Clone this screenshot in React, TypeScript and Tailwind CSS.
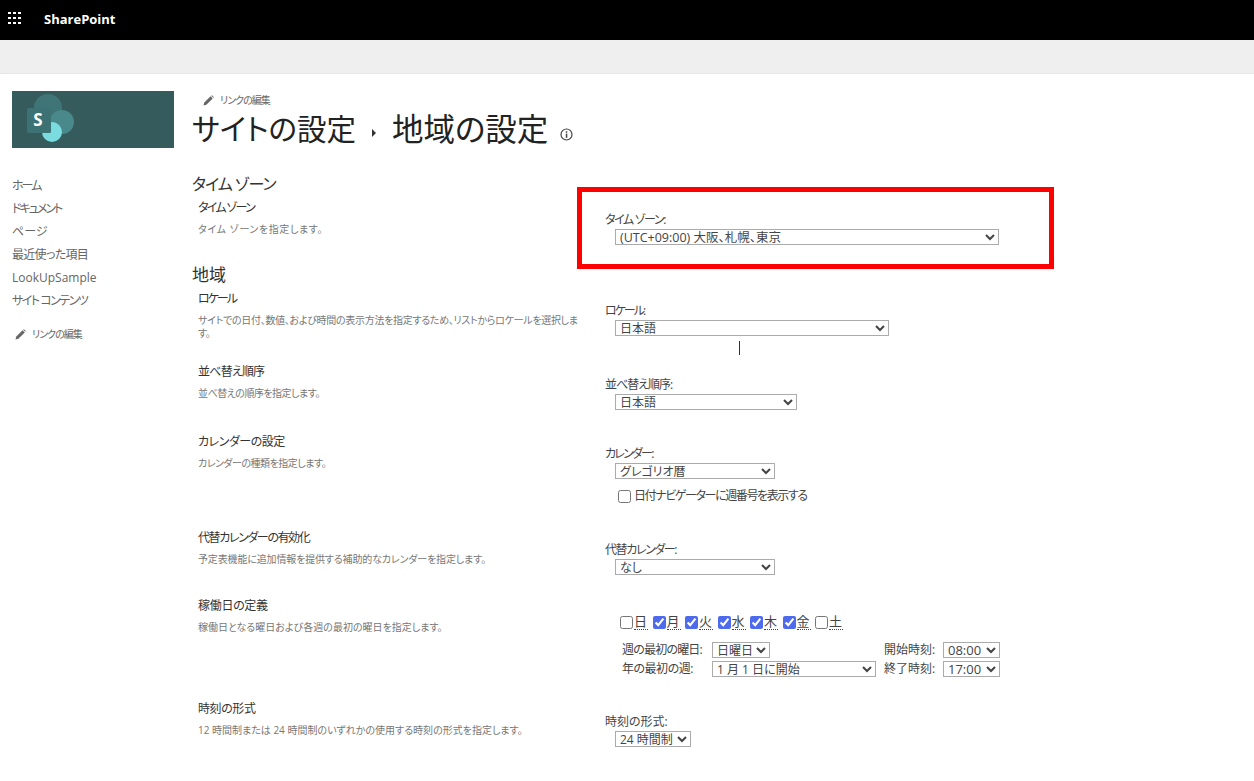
import React from "react";

const navItems = [
  { label: "ホーム", cls: "tracking-[-2px]" },
  { label: "ドキュメント", cls: "tracking-[-2px]" },
  { label: "ページ", cls: "" },
  { label: "最近使った項目", cls: "tracking-[-0.7px]" },
  { label: "LookUpSample", cls: "" },
  { label: "サイト コンテンツ", cls: "tracking-[-1.5px]" },
];

const days = [
  { label: "日", on: false },
  { label: "月", on: true },
  { label: "火", on: true },
  { label: "水", on: true },
  { label: "木", on: true },
  { label: "金", on: true },
  { label: "土", on: false },
];

function PencilIcon() {
  return (
    <svg width="11" height="11" viewBox="0 0 11 11" className="shrink-0">
      <path d="M0.5 10.5 L1.3 7.6 L7.6 1.3 L9.7 3.4 L3.4 9.7 Z" fill="#666" />
      <path d="M8.2 0.7 L8.9 0.2 L10.8 2.1 L10.3 2.8 Z" fill="#666" />
    </svg>
  );
}

// border sits on the wrapper, the select is taller than it so the CJK line box stays centered
function Select({ value, className, textCls = "text-[12px]" }: { value: string; className: string; textCls?: string }) {
  return (
    <div className={`h-4 overflow-hidden border border-[#ababab] bg-white ${className}`}>
      <select
        defaultValue={value}
        className={`-my-[3px] block h-5 w-full border-0 bg-transparent p-0 text-[#444] outline-none ${textCls}`}
      >
        <option value={value}>{value}</option>
      </select>
    </div>
  );
}

function Section({
  title,
  titleCls = "",
  desc,
  descCls = "",
  height,
  children,
}: {
  title: string;
  titleCls?: string;
  desc: React.ReactNode;
  descCls?: string;
  height: string;
  children: React.ReactNode;
}) {
  return (
    <div className={`grid grid-cols-[413px_1fr] ${height}`}>
      <div className="pl-[6px] pt-px">
        <div className={`h-5 text-[12px] leading-5 text-[#333] ${titleCls}`}>{title}</div>
        <div className={`mt-[5px] text-[10px] leading-[13px] text-[#777] ${descCls}`}>{desc}</div>
      </div>
      <div>{children}</div>
    </div>
  );
}

function Field({
  label,
  labelCls = "",
  topCls = "pt-[15px]",
  children,
}: {
  label: string;
  labelCls?: string;
  topCls?: string;
  children: React.ReactNode;
}) {
  return (
    <div className={topCls}>
      <div className={`mb-px h-4 text-[12px] leading-4 text-[#444] ${labelCls}`}>{label}</div>
      <div className="pl-[10px]">{children}</div>
    </div>
  );
}

export default function App() {
  return (
    <div
      className="relative h-screen overflow-hidden bg-white [font-feature-settings:'palt']"
      style={{ fontFamily: '"Open Sans", "Noto Sans CJK JP", sans-serif' }}
    >
      {/* top bar */}
      <div className="flex h-10 items-center bg-black">
        <div className="w-11 pl-2">
          <div className="-mt-[4px] grid w-fit grid-cols-3 gap-[2.5px]">
            {Array.from({ length: 9 }).map((_, i) => (
              <span key={i} className="h-[2.5px] w-[2.5px] bg-white" />
            ))}
          </div>
        </div>
        <span className="text-[13px] font-bold text-white">SharePoint</span>
      </div>
      <div className="h-[34px] border-b border-[#e6e6e6] bg-[#efefef]" />

      <div className="flex">
        {/* left nav */}
        <aside className="w-[192px] shrink-0 pl-3 pt-[17px]">
          <div className="h-[57px] w-[162px] bg-[#365b5d]">
            <svg width="70" height="57" viewBox="0 0 70 57">
              <circle cx="36" cy="17" r="14" fill="#3f7577" />
              <circle cx="50" cy="31" r="12" fill="#4a898b" />
              <circle cx="40" cy="41" r="10" fill="#7bdce0" />
              <rect x="15" y="17" width="24" height="25" rx="1.5" fill="#3d7274" />
              <text x="26" y="35" textAnchor="middle" fontSize="17" fontWeight="700" fill="#ffffff" fontFamily="Open Sans">
                S
              </text>
            </svg>
          </div>
          <nav className="mt-[25.5px] flex flex-col">
            {navItems.map((item) => (
              <a key={item.label} className={`h-[23px] text-[12px] leading-[23px] text-[#666] ${item.cls}`}>
                {item.label}
              </a>
            ))}
          </nav>
          <div className="ml-[3px] mt-[15px] flex items-center gap-[6px] text-[10px] tracking-[-1px] text-[#666]">
            <PencilIcon />
            <span>リンクの編集</span>
          </div>
        </aside>

        {/* content */}
        <main className="flex-1">
          <div className="ml-[11px] mt-[18px] flex h-4 items-center gap-[6px] text-[10px] tracking-[-1px] text-[#666]">
            <PencilIcon />
            <span>リンクの編集</span>
          </div>
          <div className="-mt-px flex h-[44px] items-center text-[#222]">
            <h1 className="text-[29.5px] leading-none">サイトの設定</h1>
            <span className="mx-[16px] mt-[8px] h-0 w-0 border-y-[4px] border-l-[4px] border-y-transparent border-l-[#333]" />
            <h1 className="text-[31.5px] leading-none">地域の設定</h1>
            <svg width="13" height="13" viewBox="0 0 13 13" className="ml-[12px] mt-[10px]">
              <circle cx="6.5" cy="6.5" r="5.5" fill="none" stroke="#444" strokeWidth="1.2" />
              <rect x="5.8" y="5.6" width="1.5" height="4.2" fill="#444" />
              <rect x="5.8" y="3.2" width="1.5" height="1.5" fill="#444" />
            </svg>
          </div>

          <div className="mt-[23px] h-[23px] text-[16px] leading-5 tracking-[-1px] text-[#333]">タイム ゾーン</div>
          <Section
            title="タイム ゾーン"
            titleCls="tracking-[-1.7px]"
            desc="タイム ゾーンを指定します。"
            descCls="tracking-[0.6px]"
            height="h-[68px]"
          >
            <Field label="タイム ゾーン:" labelCls="tracking-[-1.4px]">
              <Select value="(UTC+09:00) 大阪、札幌、東京" className="w-[384px]" textCls="text-[12.5px]" />
            </Field>
          </Section>

          <div className="h-[23px] text-[17px] leading-5 text-[#333]">地域</div>
          <Section
            title="ロケール"
            titleCls="tracking-[-2px]"
            desc={
              <>
                サイトでの日付、数値、および時間の表示方法を指定するため、リストからロケールを選択しま
                <br />
                す。
              </>
            }
            descCls="tracking-[-0.3px] whitespace-nowrap"
            height="h-[73px]"
          >
            <Field label="ロケール:" labelCls="tracking-[-2px]">
              <Select value="日本語" className="w-[274px]" />
            </Field>
          </Section>

          <Section
            title="並べ替え順序"
            titleCls="tracking-[-0.8px]"
            desc="並べ替えの順序を指定します。"
            descCls="tracking-[-0.5px]"
            height="h-[70px]"
          >
            <Field label="並べ替え順序:" labelCls="tracking-[-1px]" topCls="pt-[16px]">
              <Select value="日本語" className="w-[182px]" />
            </Field>
          </Section>

          <Section
            title="カレンダーの設定"
            titleCls="tracking-[-0.5px]"
            desc="カレンダーの種類を指定します。"
            descCls="tracking-[-0.5px]"
            height="h-[96px]"
          >
            <Field label="カレンダー:" labelCls="tracking-[-1.8px]">
              <Select value="グレゴリオ暦" className="w-[160px]" />
            </Field>
            <label className="ml-[13px] mt-[9px] flex h-4 items-center gap-[3px] text-[12px] tracking-[-1.4px] text-[#444]">
              <input type="checkbox" className="m-0 h-[13px] w-[13px]" />
              日付ナビゲーターに週番号を表示する
            </label>
          </Section>

          <Section
            title="代替カレンダーの有効化"
            titleCls="tracking-[-1.4px]"
            desc="予定表機能に追加情報を提供する補助的なカレンダーを指定します。"
            descCls="tracking-[-0.15px]"
            height="h-[68px]"
          >
            <Field label="代替カレンダー:" labelCls="tracking-[-1.4px]">
              <Select value="なし" className="w-[160px]" />
            </Field>
          </Section>

          <Section title="稼働日の定義" titleCls="tracking-[-0.3px]" desc="稼働日となる曜日および各週の最初の曜日を指定します。" height="h-[103px]">
            <div className="pl-[15px] pt-[19px]">
              <div className="flex h-4 items-center gap-[4.5px]">
                {days.map((d) => (
                  <label key={d.label} className="flex items-center gap-[1px] text-[13px] leading-[15px] text-[#444]">
                    <input type="checkbox" defaultChecked={d.on} className="m-0 h-[13px] w-[13px] accent-[#4f6bed]" />
                    <span className="w-[14px] border-b border-dotted border-[#444]">{d.label}</span>
                  </label>
                ))}
              </div>
              <div className="ml-[2px] mt-[12px] grid auto-rows-[16px] grid-cols-[90px_172px_59px_57px] items-center gap-y-[3px] text-[12px] leading-4 text-[#444]">
                <span className="tracking-[-0.8px]">週の最初の曜日:</span>
                <Select value="日曜日" className="w-[58px]" />
                <span>開始時刻:</span>
                <Select value="08:00" className="w-[57px]" textCls="text-[13px]" />
                <span className="tracking-[-0.5px]">年の最初の週:</span>
                <Select value="1 月 1 日に開始" className="w-[164px]" />
                <span>終了時刻:</span>
                <Select value="17:00" className="w-[57px]" textCls="text-[13px]" />
              </div>
            </div>
          </Section>

          <Section
            title="時刻の形式"
            titleCls="tracking-[-0.4px]"
            desc="12 時間制または 24 時間制のいずれかの使用する時刻の形式を指定します。"
            height="h-[60px]"
          >
            <Field label="時刻の形式:" topCls="pt-[16px]">
              <Select value="24 時間制" className="w-[76px]" />
            </Field>
          </Section>
        </main>
      </div>

      {/* annotation over the page */}
      <div className="absolute left-[577px] top-[187px] h-[82px] w-[477px] border-[5px] border-[#ff0000]" />
      <div className="absolute left-[739px] top-[341px] h-[14px] w-px bg-[#333]" />
    </div>
  );
}
